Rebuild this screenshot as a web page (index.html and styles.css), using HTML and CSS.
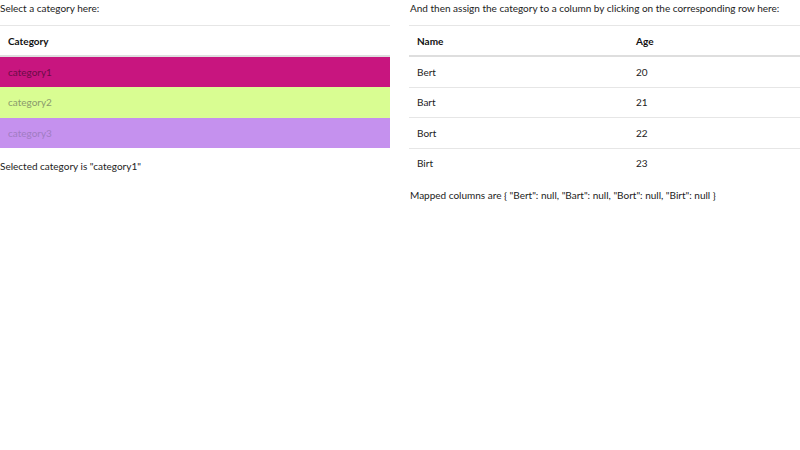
FILE: index.html
```html
<!DOCTYPE html>
<html>
<head>
<meta charset="utf-8">
<link rel="stylesheet" href="styles.css">
</head>
<body>
<div class="page">
  <section class="col">
    <p class="intro">Select a category here:</p>
    <table class="tbl">
      <thead><tr><th>Category</th></tr></thead>
      <tbody>
        <tr class="cat cat1"><td>category1</td></tr>
        <tr class="cat cat2"><td>category2</td></tr>
        <tr class="cat cat3"><td>category3</td></tr>
      </tbody>
    </table>
    <p class="note">Selected category is "category1"</p>
  </section>
  <section class="col right">
    <p class="intro">And then assign the category to a column by clicking on the corresponding row here:</p>
    <table class="tbl people">
      <thead><tr><th class="name">Name</th><th>Age</th></tr></thead>
      <tbody>
        <tr><td class="name">Bert</td><td>20</td></tr>
        <tr><td class="name">Bart</td><td>21</td></tr>
        <tr><td class="name">Bort</td><td>22</td></tr>
        <tr><td class="name">Birt</td><td>23</td></tr>
      </tbody>
    </table>
    <p class="note">Mapped columns are { "Bert": null, "Bart": null, "Bort": null, "Birt": null }</p>
  </section>
</div>
</body>
</html>
```
FILE: styles.css
```css
html, body {
  margin: 0;
  padding: 0;
  background: #fff;
}
body {
  font-family: Lato, "Open Sans", sans-serif;
  font-size: 10px;
  color: #222;
}
.page {
  display: grid;
  grid-template-columns: 390px 391px;
  column-gap: 19px;
}
.intro {
  margin: 0;
  height: 25px;
  line-height: 16px;
  white-space: nowrap;
}
.right .intro {
  padding-left: 1px;
}
.tbl {
  width: 100%;
  border-collapse: collapse;
  border-top: 1px solid #e6e6e6;
}
.tbl th {
  text-align: left;
  font-weight: 700;
  color: #111;
  height: 29px;
  padding: 0 8px;
  border-bottom: 2px solid #dedede;
}
.tbl td {
  height: 30.3px;
  padding: 0 8px;
}
.people td {
  height: 29.5px;
  border-bottom: 1px solid #e6e6e6;
}
.people tbody tr:last-child td {
  border-bottom: none;
}
.people .name {
  width: 203px;
}
.cat1 { background: #c8157f; color: #6b0c47; }
.cat2 { background: #d9fd92; color: #8a9a6c; }
.cat3 { background: #c591ee; color: #a07cc2; }
.note {
  margin: 0;
  padding-top: 11px;
  line-height: 14px;
}
.right .note {
  padding-left: 1px;
  padding-top: 10px;
}
```
